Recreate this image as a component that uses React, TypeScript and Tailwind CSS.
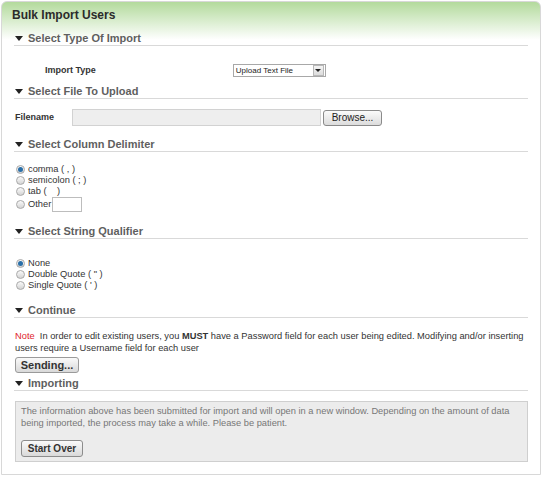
function Header({ title, className = "" }: { title: string; className?: string }) {
  return (
    <div
      className={`ml-[12px] mr-[12px] h-[14px] flex items-center border-b border-[#d9d9d9] ${className}`}
    >
      <span className="ml-[1px] w-0 h-0 border-l-[4px] border-r-[4px] border-t-[5px] border-l-transparent border-r-transparent border-t-[#222]" />
      <span className="ml-[5px] text-[11px] font-bold text-[#5f5f5f] leading-[13px]">{title}</span>
    </div>
  );
}

function Radio({ label, checked = false }: { label: React.ReactNode; checked?: boolean }) {
  return (
    <div className="h-[11px] flex items-center">
      <span className="w-[9px] h-[9px] rounded-full border border-[#a9a9a9] bg-gradient-to-b from-[#fafafa] to-[#d4d4d4] flex items-center justify-center">
        {checked && <span className="w-[5px] h-[5px] rounded-full bg-[#2a6fa8]" />}
      </span>
      <span className="ml-[3px] text-[9.3px] text-[#333] leading-[11px]">{label}</span>
    </div>
  );
}

export default function App() {
  return (
    <div
      className="w-[542px] h-[477px] bg-white pt-[1px] pl-[1px]"
      style={{ fontFamily: '"Liberation Sans", Arial, sans-serif' }}
    >
      <div className="w-[540px] h-[474px] border border-[#d8d8d8] rounded-t-[6px] bg-gradient-to-b from-[#b3da9c] via-white via-[8%] to-white">
        {/* title */}
        <div className="h-[26px] flex items-center pl-[10px] text-[12px] font-bold text-[#2b2b2b]">
          Bulk Import Users
        </div>

        {/* type of import */}
        <Header title="Select Type Of Import" className="mt-[4px]" />
        <div className="mt-[18px] h-[13px] flex items-center">
          <span className="ml-[43px] text-[9px] font-bold text-[#333]">Import Type</span>
          <div className="ml-[137px] w-[93px] h-[13px] border border-[#a8a8a8] bg-white flex items-center">
            <span className="ml-[2px] flex-1 text-[8px] text-[#222] leading-[11px]">Upload Text File</span>
            <span className="w-[11px] h-[11px] mr-[1px] border border-[#b8b8b8] bg-gradient-to-b from-[#f4f4f4] to-[#dcdcdc] flex items-center justify-center">
              <span className="w-0 h-0 border-l-[3px] border-r-[3px] border-t-[3px] border-l-transparent border-r-transparent border-t-[#222]" />
            </span>
          </div>
        </div>

        {/* file to upload */}
        <Header title="Select File To Upload" className="mt-[8px]" />
        <div className="mt-[10px] h-[17px] flex items-center">
          <span className="ml-[13px] w-[57px] text-[9px] font-bold text-[#333]">Filename</span>
          <div className="w-[249px] h-[17px] bg-[#eeeeee] border border-[#d2d2d2]" />
          <button className="ml-[2px] w-[59px] h-[16px] border border-[#8a8a8a] rounded-[3px] bg-gradient-to-b from-[#fbfbfb] to-[#dcdcdc] text-[10px] text-[#222] leading-[14px]">
            Browse...
          </button>
        </div>

        {/* delimiter */}
        <Header title="Select Column Delimiter" className="mt-[12px]" />
        <div className="mt-[12px] ml-[14px]">
          <Radio label="comma ( , )" checked />
          <Radio label="semicolon ( ; )" />
          <Radio label={<>tab (&nbsp;&nbsp;&nbsp;&nbsp;)</>} />
          <div className="h-[15px] flex items-center">
            <span className="w-[9px] h-[9px] rounded-full border border-[#a9a9a9] bg-gradient-to-b from-[#fafafa] to-[#d4d4d4]" />
            <span className="ml-[3px] text-[9.3px] text-[#333]">Other</span>
            <div className="ml-[1px] w-[30px] h-[15px] border border-[#bdbdbd] bg-white" />
          </div>
        </div>

        {/* qualifier */}
        <Header title="Select String Qualifier" className="mt-[13px]" />
        <div className="mt-[19px] ml-[14px]">
          <Radio label="None" checked />
          <Radio label={'Double Quote ( " )'} />
          <Radio label="Single Quote ( ' )" />
        </div>

        {/* continue */}
        <Header title="Continue" className="mt-[13px]" />
        <div className="ml-[13px] mr-[12px] mt-[12px]">
          <p className="text-[9.3px] leading-[12px] text-[#333]">
            <span className="text-[#e0242c]">Note</span>&nbsp; In order to edit existing users, you{" "}
            <b>MUST</b> have a Password field for each user being edited. Modifying and/or inserting
            users require a Username field for each user
          </p>
          <button className="block mt-[3px] w-[64px] h-[16px] border border-[#9a9a9a] rounded-[3px] bg-gradient-to-b from-[#fafafa] to-[#d9d9d9] text-[11px] font-bold text-[#333] leading-[14px]">
            Sending...
          </button>
        </div>

        {/* importing */}
        <Header title="Importing" className="mt-[4px]" />
        <div className="ml-[13px] mr-[12px] mt-[10px] border border-[#cfcfcf] bg-[#ececec] pl-[5px] pr-[5px] pt-[3px] pb-[4px]">
          <p className="text-[9.3px] leading-[12px] text-[#777]">
            The information above has been submitted for import and will open in a new window. Depending on the
            amount of data being imported, the process may take a while. Please be patient.
          </p>
          <button className="block mt-[11px] w-[62px] h-[17px] border border-[#8c8c8c] rounded-[3px] bg-gradient-to-b from-[#fafafa] to-[#d9d9d9] text-[10px] font-bold text-[#333] leading-[15px]">
            Start Over
          </button>
        </div>
      </div>
    </div>
  );
}
